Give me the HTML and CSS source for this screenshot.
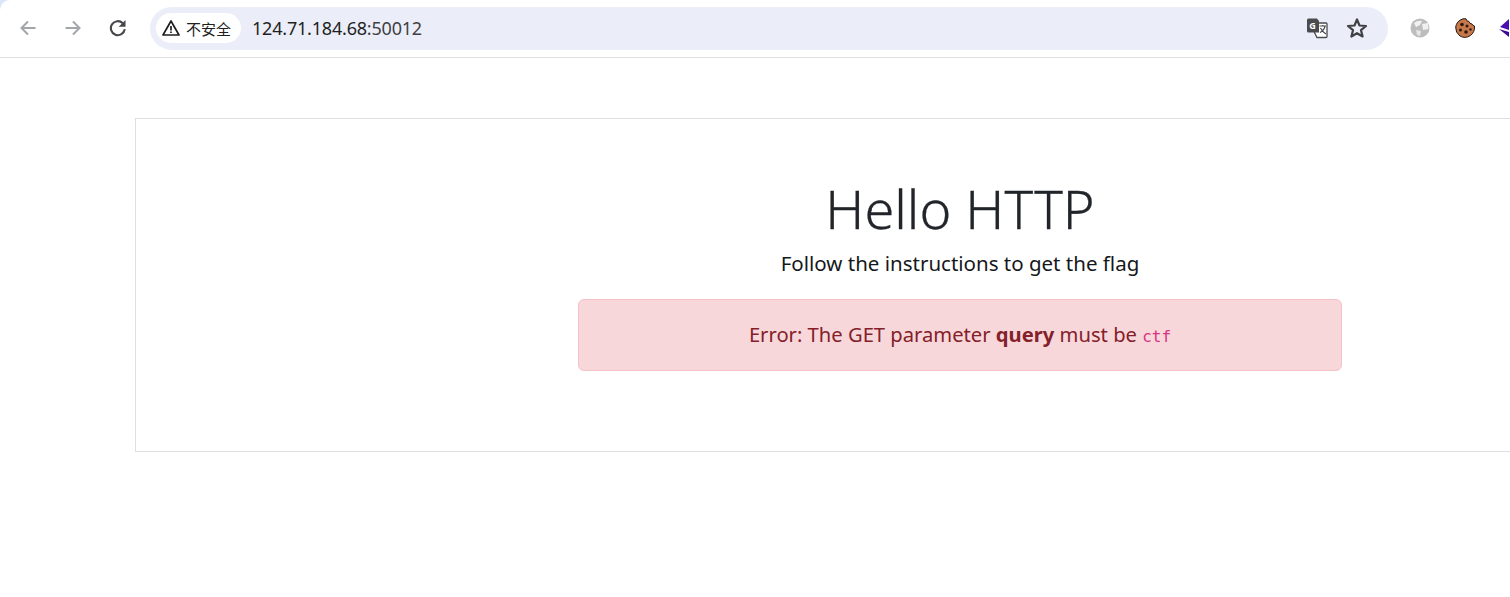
FILE: index.html
```html
<!DOCTYPE html>
<html lang="en">
<head>
<meta charset="utf-8">
<title>Hello HTTP</title>
<link rel="stylesheet" href="styles.css">
</head>
<body>
<header class="toolbar">
  <svg class="nav-icon back" viewBox="0 0 18 18"><path d="M16.500 9H2.500M9 2.500L2.500 9 9 15.500" fill="none" stroke="#a3a5a8" stroke-width="2"/></svg>
  <svg class="nav-icon forward" viewBox="0 0 18 18"><path d="M1.500 9H15.500M9 2.500L15.500 9 9 15.500" fill="none" stroke="#a3a5a8" stroke-width="2"/></svg>
  <svg class="nav-icon reload" viewBox="0 0 18 18"><path d="M15.800 10.200A7 7 0 1 1 13.800 4.200" fill="none" stroke="#45474a" stroke-width="2.100"/><path d="M16.500 1V7.800H9.700Z" fill="#45474a"/></svg>
  <div class="omnibox">
    <div class="security">
      <svg class="warn" viewBox="0 0 18 18"><path d="M9 2L17 16H1Z" fill="none" stroke="#1f1f1f" stroke-width="1.700" stroke-linejoin="round"/><path d="M9 7V11.500M9 12.500V14" stroke="#1f1f1f" stroke-width="1.700"/></svg>
      <span class="security-label">不安全</span>
    </div>
    <div class="url"><span class="host">124.71.184.68</span><span class="port">:50012</span></div>
    <svg class="translate" viewBox="0 0 22 22">
      <path d="M8.500 6H20Q21 6 21 7V19.500Q21 20.500 20 20.500H11L8.500 15.500Z" fill="#fff" stroke="#4a4b4e" stroke-width="1.300"/>
      <path d="M1 3Q1 1.500 2.500 1.500H11L13 4V15.500H2.500Q1 15.500 1 14Z" fill="#4a4b4e"/>
      <text x="3.300" y="11.800" class="translate-g">G</text>
      <path d="M13.500 9H20M16.800 8V9.500M19 9.500Q17.500 14 14 15.500M14.500 11Q16.500 15 20 17" fill="none" stroke="#4a4b4e" stroke-width="1.200"/>
    </svg>
    <svg class="star" viewBox="0 0 22 22"><path d="M11 2.500L13.500 8.500 20 9 15 13.200 16.600 19.500 11 16.200 5.400 19.500 7 13.200 2 9 8.500 8.500Z" fill="none" stroke="#3f4144" stroke-width="2.200" stroke-linejoin="round"/></svg>
  </div>
  <svg class="ext globe" viewBox="0 0 20 20">
    <circle cx="10" cy="10" r="9.500" fill="#bdbdbd"/>
    <path d="M4 5Q8 2 12 3L10 7 6 9Z" fill="#f2f2f2"/>
    <path d="M12 6L18 5 18.500 11 13 12Z" fill="#f0f0f0"/>
    <path d="M6 12L11 13 10 18 7 17Z" fill="#e6e6e6"/>
  </svg>
  <svg class="ext cookie" viewBox="0 0 20 20">
    <path d="M11 .8Q11.500 3.500 14 3.500 14.500 6 17 6 17.500 7.500 19.500 8 20 14 15.500 17.500 10 21 5 18 .3 14.500.7 9 1.500 3 8 .8Z" fill="#c7784a" stroke="#2a1a10" stroke-width="1"/>
    <circle cx="7" cy="6.500" r="1.800" fill="#2a1a10"/><circle cx="12" cy="8" r="1.500" fill="#2a1a10"/><circle cx="5.500" cy="12" r="1.500" fill="#2a1a10"/><circle cx="11" cy="14" r="1.800" fill="#2a1a10"/><circle cx="15.500" cy="11.500" r="1.200" fill="#2a1a10"/>
  </svg>
  <svg class="ext gem" viewBox="0 0 10 20"><path d="M10 1L1 9 10 12Z" fill="#4b0fb0"/><path d="M0 11L10 14 10 19Z" fill="#3b0a94"/></svg>
</header>
<main class="card">
  <h1 class="title">Hello HTTP</h1>
  <p class="lead">Follow the instructions to get the flag</p>
  <div class="alert">Error: The GET parameter <b>query</b> must be <code>ctf</code></div>
</main>
</body>
</html>
```
FILE: styles.css
```css
* { box-sizing: border-box; }
html, body { margin: 0; height: 100%; overflow: hidden; background: #fff; }
body { font-family: "Noto Sans", "Open Sans", sans-serif; color: #212529; }

.toolbar {
  display: flex;
  align-items: center;
  height: 58px;
  padding: 0 0 1px 19px;
  border-bottom: 1px solid #dfe1e5;
  border-top-left-radius: 10px;
  box-shadow: -4px -4px 0 4px #dbe6fb;
  overflow: hidden;
}
.nav-icon { width: 18px; height: 18px; flex: none; }
.back { margin-right: 27px; }
.forward { margin-right: 27px; }
.reload { margin-right: 23px; }

.omnibox {
  display: flex;
  align-items: center;
  flex: none;
  width: 1238px;
  height: 43px;
  padding: 0 20px 0 6px;
  background: #ebeef8;
  border-radius: 22px;
}
.security {
  display: flex;
  align-items: center;
  gap: 6px;
  width: 85px;
  height: 30px;
  padding-left: 6px;
  background: #fff;
  border-radius: 15px;
}
.warn { width: 18px; height: 18px; flex: none; }
.security-label { font: 15px "Noto Sans CJK SC", sans-serif; color: #1f1f1f; }
.url { flex: 1; margin-left: 11px; font-size: 18px; letter-spacing: -.2px; color: #1f1f1f; }
.port { color: #3f4144; }
.translate { width: 22px; height: 22px; margin-right: 18px; }
.translate-g { font: 700 9px "Noto Sans", sans-serif; fill: #fff; }
.star { width: 22px; height: 22px; }

.ext { flex: none; height: 20px; width: 20px; }
.globe { margin-left: 22px; }
.cookie { margin-left: 25px; }
.gem { margin-left: 24px; width: 10px; }

.card {
  width: 1650px;
  height: 334px;
  margin: 60px 0 0 135px;
  padding-top: 54px;
  border: 1px solid #dfdfdf;
  text-align: center;
}
.title { margin: 0; font-size: 54px; font-weight: 300; line-height: 71px; letter-spacing: 0; -webkit-text-stroke: .3px #212529; }
.lead { margin: 6px 0 0; font-size: 20.500px; line-height: 27px; color: #15181b; }
.alert {
  width: 764px;
  height: 72px;
  margin: 22px auto 0;
  border: 1px solid #f5c2c7;
  border-radius: 6px;
  background: #f8d7da;
  color: #842029;
  font-size: 20.200px;
  line-height: 68px;
}
.alert b { font-weight: 700; }
.alert code { font: 16px "DejaVu Sans Mono", monospace; color: #d63384; }
```
